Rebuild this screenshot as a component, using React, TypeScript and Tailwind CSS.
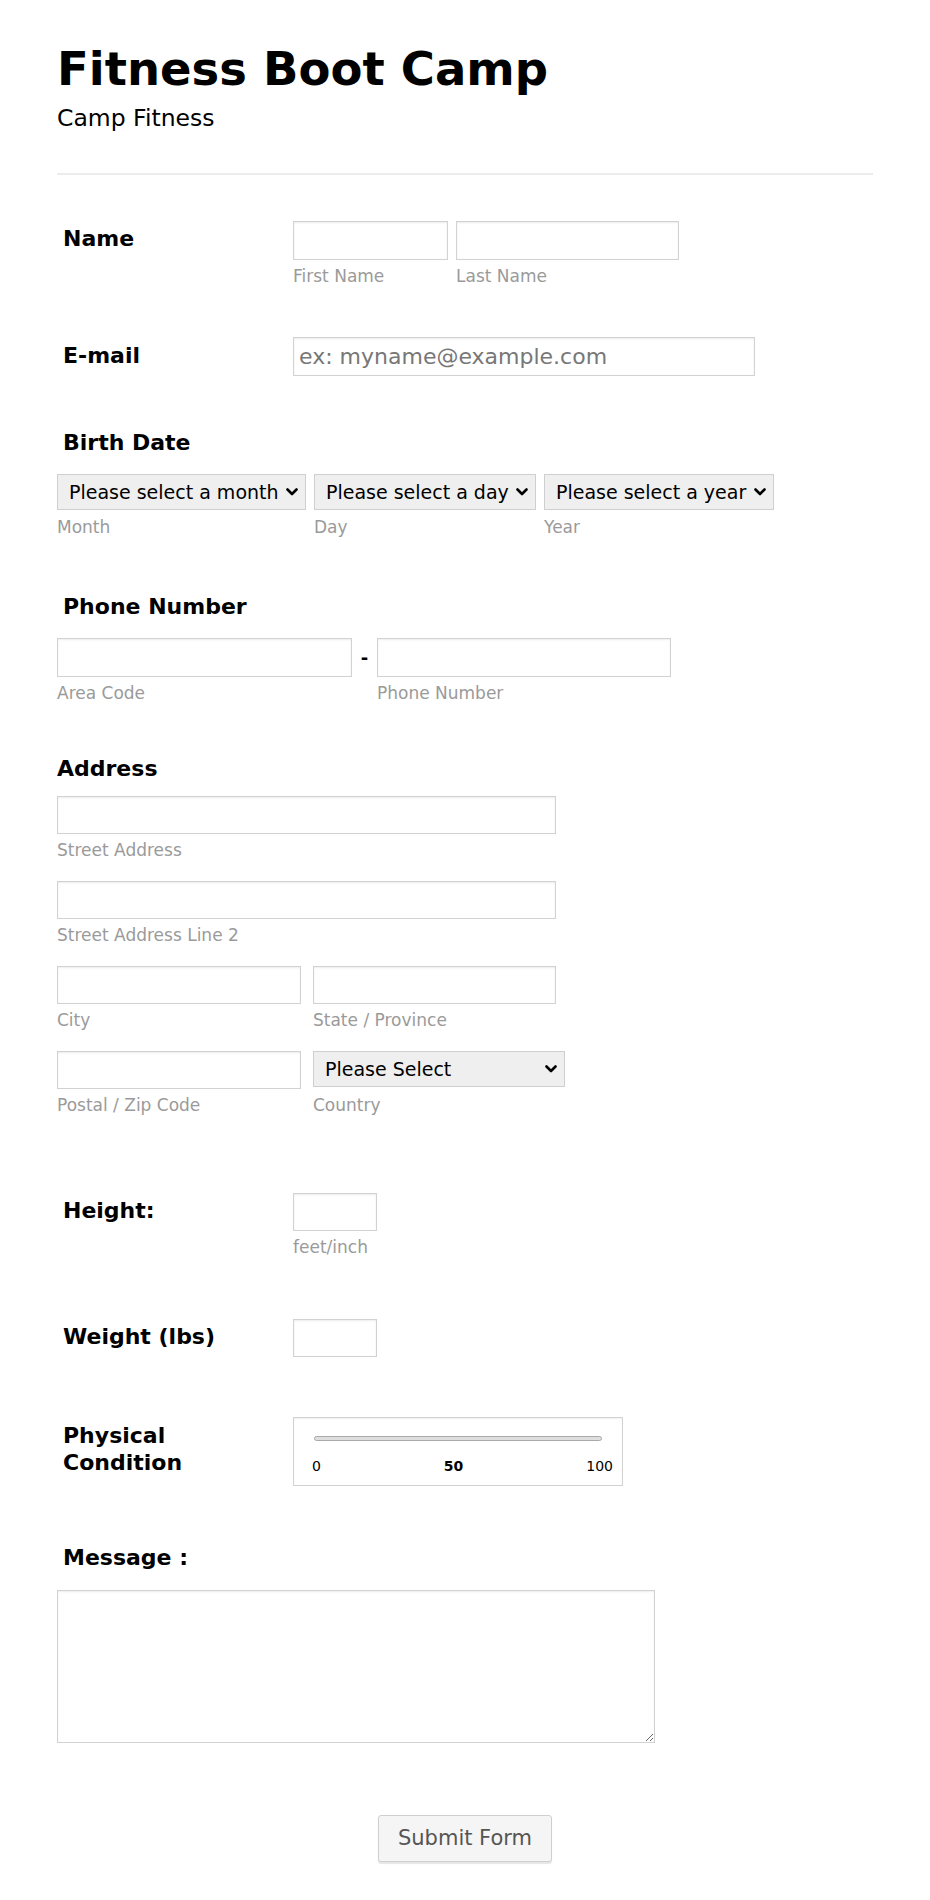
import React from "react";

const inputCls =
  "block border border-[#d2d2d2] bg-white shadow-[inset_0_1px_2px_rgba(0,0,0,0.08)] px-[6px] text-[19px] outline-none";
const subCls = "mt-[6px] text-[17px] leading-[20px] text-[#9a9a9a]";
const labelCls = "text-[22px] font-bold leading-[26px] text-black";
const selectCls =
  "block h-[36px] appearance-none border border-[#cfcfcf] bg-[#efefef] pl-[11px] pr-[24px] text-[19px] text-black outline-none";

function Field({
  w,
  h = 39,
  sub,
  className = "",
}: {
  w: string;
  h?: number;
  sub?: string;
  className?: string;
}) {
  return (
    <div className={className}>
      <input type="text" className={`${inputCls} ${w} ${h === 38 ? "h-[38px]" : "h-[39px]"}`} />
      {sub && <div className={subCls}>{sub}</div>}
    </div>
  );
}

function Select({ w, text, sub, subGap = "mt-[7px]" }: { w: string; text: string; sub: string; subGap?: string }) {
  return (
    <div>
      <div className="relative">
        <select className={`${selectCls} ${w}`}>
          <option>{text}</option>
        </select>
        {/* dropdown chevron */}
        <svg
          className="pointer-events-none absolute right-[8px] top-[14px]"
          width="12"
          height="8"
          viewBox="0 0 12 8"
          fill="none"
        >
          <path d="M1.5 1.5L6 6L10.5 1.5" stroke="#000" strokeWidth="2.6" strokeLinecap="round" strokeLinejoin="round" />
        </svg>
      </div>
      <div className={`${subCls} ${subGap}`}>{sub}</div>
    </div>
  );
}

export default function App() {
  return (
    <div className="min-h-[1900px] bg-white px-[57px] pt-[42px] pb-[40px] text-black [font-family:'DejaVu_Sans',Verdana,sans-serif]">
      {/* Header */}
      <h1 className="text-[46.5px] font-bold leading-[54px]">Fitness Boot Camp</h1>
      <div className="mt-[9px] text-[23.5px] leading-[27px]">Camp Fitness</div>
      <div className="mt-[41px] h-[2px] w-full bg-[#ececec]" />

      {/* Name */}
      <div className="mt-[46px] flex">
        <div className={`w-[236px] pl-[6px] pt-[5px] ${labelCls}`}>Name</div>
        <Field w="w-[155px]" sub="First Name" />
        <Field w="w-[223px]" sub="Last Name" className="ml-[8px]" />
      </div>

      {/* E-mail */}
      <div className="mt-[51px] flex">
        <div className={`w-[236px] pl-[6px] pt-[6px] ${labelCls}`}>E-mail</div>
        <input
          type="email"
          placeholder="ex: myname@example.com"
          className={`${inputCls} h-[39px] w-[462px] !pl-[5px] !text-[22px] placeholder:text-[#777]`}
        />
      </div>

      {/* Birth date */}
      <div className={`mt-[54px] pl-[6px] ${labelCls}`}>Birth Date</div>
      <div className="mt-[18px] flex gap-[8px]">
        <Select w="w-[249px]" text="Please select a month" sub="Month" />
        <Select w="w-[222px]" text="Please select a day" sub="Day" />
        <Select w="w-[230px]" text="Please select a year" sub="Year" />
      </div>

      {/* Phone */}
      <div className={`mt-[57px] pl-[6px] ${labelCls}`}>Phone Number</div>
      <div className="mt-[18px] flex">
        <Field w="w-[295px]" sub="Area Code" />
        <div className="flex h-[39px] w-[25px] items-center justify-center text-[18px] font-bold">-</div>
        <Field w="w-[294px]" sub="Phone Number" />
      </div>

      {/* Address */}
      <div className={`mt-[53px] ${labelCls}`}>Address</div>
      <div className="mt-[14px] flex w-[499px] flex-col gap-[21px]">
        <Field w="w-[499px]" h={38} sub="Street Address" />
        <Field w="w-[499px]" h={38} sub="Street Address Line 2" />
        <div className="flex gap-[12px]">
          <Field w="w-[244px]" h={38} sub="City" />
          <Field w="w-[243px]" h={38} sub="State / Province" />
        </div>
        <div className="flex gap-[12px]">
          <Field w="w-[244px]" h={38} sub="Postal / Zip Code" />
          <Select w="w-[252px]" text="Please Select" sub="Country" subGap="mt-[8px]" />
        </div>
      </div>

      {/* Height */}
      <div className="mt-[78px] flex">
        <div className={`w-[236px] pl-[6px] pt-[5px] ${labelCls}`}>Height:</div>
        <Field w="w-[84px]" h={38} sub="feet/inch" />
      </div>

      {/* Weight */}
      <div className="mt-[62px] flex">
        <div className={`w-[236px] pl-[6px] pt-[5px] ${labelCls}`}>Weight (lbs)</div>
        <Field w="w-[84px]" h={38} />
      </div>

      {/* Physical condition slider */}
      <div className="mt-[60px] flex">
        <div className="w-[236px] pl-[6px] pt-[5px] text-[22px] font-bold leading-[27px]">
          Physical
          <br />
          Condition
        </div>
        <div className="h-[69px] w-[330px] border border-[#d2d2d2] bg-white pt-[18px] shadow-[inset_0_1px_2px_rgba(0,0,0,0.06)]">
          <div className="mx-[20px] h-[5px] rounded-full border border-[#a9a9a9] bg-[#dedede]" />
          <div className="mt-[17px] flex justify-between pl-[18px] pr-[9px] text-[14px] leading-[16px]">
            <span>0</span>
            <span className="font-bold">50</span>
            <span>100</span>
          </div>
        </div>
      </div>

      {/* Message */}
      <div className={`mt-[59px] pl-[6px] ${labelCls}`}>Message :</div>
      <textarea className="mt-[19px] block h-[153px] w-[598px] border border-[#d2d2d2] bg-white shadow-[inset_0_1px_2px_rgba(0,0,0,0.08)] outline-none" />

      {/* Submit */}
      <div className="mt-[72px] flex justify-center">
        <button
          type="button"
          className="h-[47px] w-[174px] rounded-[3px] border border-[#cfcfcf] bg-[#f5f5f5] text-[21px] text-[#555] shadow-[0_2px_1px_rgba(0,0,0,0.1)]"
        >
          Submit Form
        </button>
      </div>
    </div>
  );
}
